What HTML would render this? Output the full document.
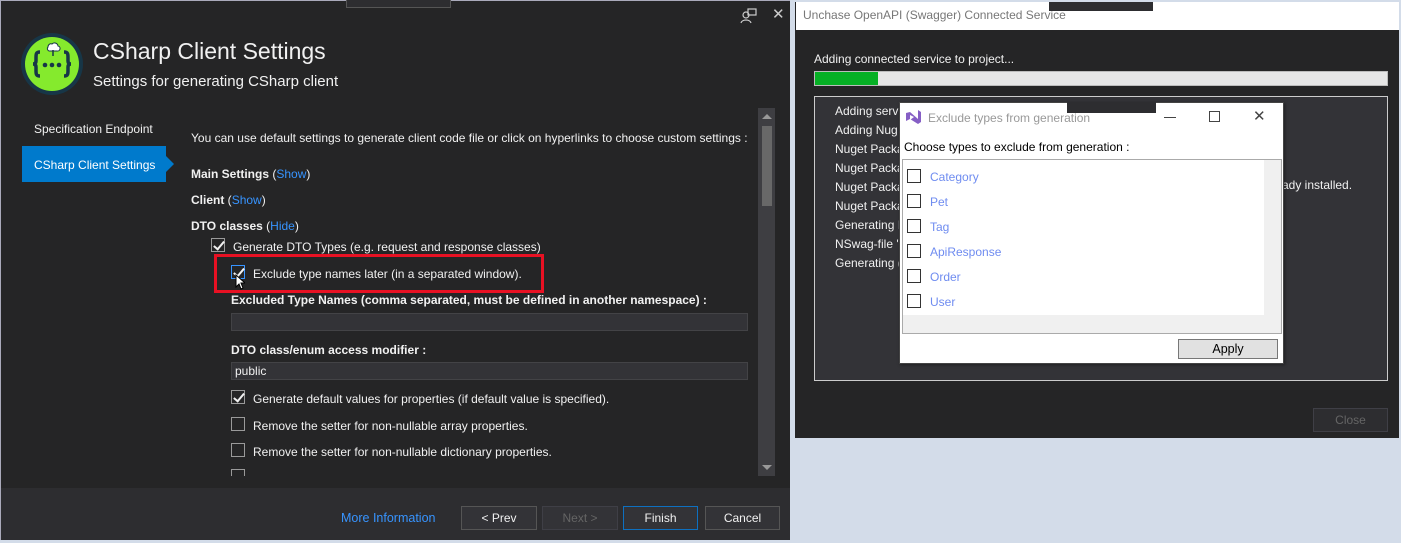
<!DOCTYPE html>
<html><head><meta charset="utf-8"><style>
*{box-sizing:border-box;margin:0;padding:0}
body{width:1401px;height:543px;background:#d3dce9;position:relative;overflow:hidden;font-family:"Liberation Sans",sans-serif;font-size:12px;color:#f1f1f1}
.a{position:absolute;white-space:nowrap}
.cb{position:absolute;width:14px;height:14px;border:1px solid #9a9a9a}
.ck::after{content:"";position:absolute;left:4px;top:0px;width:4px;height:9px;border:solid #f1f1f1;border-width:0 2px 2px 0;transform:rotate(40deg)}
.lnk{color:#3794ff}
.btn{position:absolute;height:24px;border:1px solid #555;background:#333337;color:#f1f1f1;text-align:center;line-height:22px;font-size:12px}
.wcb{position:absolute;width:14px;height:14px;border:1px solid #333;background:#fff}
.wl{position:absolute;color:#6f8cf0;font-size:12px}
</style></head><body>
<!-- left dialog -->
<div class="a" style="left:0;top:0;width:790px;height:540px;background:#252526;border-left:1px solid #aab;border-top:1px solid #aab"></div>
<div class="a" style="left:1px;top:488px;width:789px;height:52px;background:#2d2d30"></div>
<div class="a" style="left:346px;top:0;width:105px;height:8px;background:#2d2d30;border:1px solid #555;border-top:none"></div>
<svg class="a" style="left:740px;top:7px" width="18" height="18" viewBox="0 0 18 18" fill="none" stroke="#ccc" stroke-width="1.2"><rect x="8" y="2" width="8" height="6"/><circle cx="6" cy="8" r="3"/><path d="M1 16c1-4 9-4 10 0"/></svg>
<div class="a" style="left:772px;top:5px;color:#ccc;font-size:15px">✕</div>
<svg class="a" style="left:20px;top:32px" width="64" height="64" viewBox="0 0 64 64"><circle cx="32" cy="32" r="31" fill="#173647"/><circle cx="32" cy="32" r="27" fill="#85ea2d"/>
<path d="M20 20c-4 0-4 2-4 6v3c0 2-1 3-3 3c2 0 3 1 3 3v3c0 4 0 6 4 6" fill="none" stroke="#173647" stroke-width="3.5"/>
<path d="M44 20c4 0 4 2 4 6v3c0 2 1 3 3 3c-2 0-3 1-3 3v3c0 4 0 6-4 6" fill="none" stroke="#173647" stroke-width="3.5"/>
<circle cx="25" cy="33" r="2.3" fill="#173647"/><circle cx="32" cy="33" r="2.3" fill="#173647"/><circle cx="39" cy="33" r="2.3" fill="#173647"/>
<path d="M28 15a3 3 0 0 1 4-3a3.5 3.5 0 0 1 6 2a2.5 2.5 0 0 1-1 5h-8a2.5 2.5 0 0 1-1-4z" fill="#fff" stroke="#173647" stroke-width="1"/><path d="M33 18v6" stroke="#173647" stroke-width="1.5"/></svg>
<div class="a" style="left:93px;top:38px;font-size:23px;color:#f1f1f1">CSharp Client Settings</div>
<div class="a" style="left:93px;top:73px;font-size:15px">Settings for generating CSharp client</div>
<div class="a" style="left:34px;top:122px">Specification Endpoint</div>
<div class="a" style="left:22px;top:146px;width:144px;height:36px;background:#007acc"></div>
<div class="a" style="left:166px;top:156px;width:0;height:0;border-left:8px solid #007acc;border-top:8px solid transparent;border-bottom:8px solid transparent"></div>
<div class="a" style="left:34px;top:158px;color:#fff">CSharp Client Settings</div>
<div class="a" style="left:191px;top:131px">You can use default settings to generate client code file or click on hyperlinks to choose custom settings :</div>
<div class="a" style="left:191px;top:167px"><b>Main Settings</b> (<span class="lnk">Show</span>)</div>
<div class="a" style="left:191px;top:193px"><b>Client</b> (<span class="lnk">Show</span>)</div>
<div class="a" style="left:191px;top:219px"><b>DTO classes</b> (<span class="lnk">Hide</span>)</div>
<div class="cb ck" style="left:211px;top:238px"></div>
<div class="a" style="left:233px;top:240px">Generate DTO Types (e.g. request and response classes)</div>
<div class="a" style="left:214px;top:254px;width:330px;height:39px;border:3px solid #e81123"></div>
<div class="cb ck" style="left:231px;top:265px;border-color:#3794ff"></div>
<div class="a" style="left:253px;top:267px">Exclude type names later (in a separated window).</div>
<svg class="a" style="left:235px;top:274px" width="10" height="16" viewBox="0 0 10 16"><path d="M1 1v12l3-3 2 5 2-1-2-5h4z" fill="#fff" stroke="#000" stroke-width="1"/></svg>
<div class="a" style="left:231px;top:293px;font-weight:bold">Excluded Type Names (comma separated, must be defined in another namespace) :</div>
<div class="a" style="left:231px;top:313px;width:517px;height:18px;background:#333337;border:1px solid #434346"></div>
<div class="a" style="left:231px;top:343px;font-weight:bold">DTO class/enum access modifier :</div>
<div class="a" style="left:231px;top:362px;width:517px;height:18px;background:#333337;border:1px solid #434346;padding-left:3px;line-height:16px">public</div>
<div class="cb ck" style="left:231px;top:390px"></div>
<div class="a" style="left:253px;top:392px">Generate default values for properties (if default value is specified).</div>
<div class="cb" style="left:231px;top:417px"></div>
<div class="a" style="left:253px;top:419px">Remove the setter for non-nullable array properties.</div>
<div class="cb" style="left:231px;top:443px"></div>
<div class="a" style="left:253px;top:445px">Remove the setter for non-nullable dictionary properties.</div>
<div class="a" style="left:231px;top:469px;width:14px;height:7px;border:1px solid #9a9a9a;border-bottom:none"></div>
<div class="a" style="left:758px;top:108px;width:17px;height:368px;background:#3e3e42"></div>
<div class="a" style="left:762px;top:126px;width:10px;height:80px;background:#686868"></div>
<div class="a" style="left:762px;top:114px;border-left:5px solid transparent;border-right:5px solid transparent;border-bottom:5px solid #999"></div>
<div class="a" style="left:762px;top:465px;border-left:5px solid transparent;border-right:5px solid transparent;border-top:5px solid #999"></div>
<div class="a lnk" style="left:341px;top:511px;font-size:12.5px">More Information</div>
<div class="btn" style="left:461px;top:506px;width:76px">&lt; Prev</div>
<div class="btn" style="left:542px;top:506px;width:76px;color:#656565;border-color:#3f3f46">Next &gt;</div>
<div class="btn" style="left:623px;top:506px;width:75px;border-color:#0e70c0">Finish</div>
<div class="btn" style="left:705px;top:506px;width:75px">Cancel</div>
<!-- right dialog -->
<div class="a" style="left:795px;top:2px;width:604px;height:436px;background:#252526"></div>
<div class="a" style="left:796px;top:2px;width:603px;height:28px;background:#fff"></div>
<div class="a" style="left:803px;top:8px;color:#777;font-size:12px">Unchase OpenAPI (Swagger) Connected Service</div>
<div class="a" style="left:1049px;top:2px;width:104px;height:9px;background:#2d2d30"></div>
<div class="a" style="left:814px;top:52px">Adding connected service to project...</div>
<div class="a" style="left:814px;top:71px;width:574px;height:15px;background:#e6e6e6;border:1px solid #bcbcbc"></div>
<div class="a" style="left:815px;top:72px;width:63px;height:13px;background:#06b025"></div>
<div class="a" style="left:814px;top:96px;width:574px;height:285px;background:#333337;border:1px solid #ccc"></div>
<div class="a" style="left:835px;top:102px;line-height:19px">Adding serv<br>Adding Nug<br>Nuget Packa<br>Nuget Packa<br>Nuget Packa<br>Nuget Packa<br>Generating I<br>NSwag-file '<br>Generating (</div>
<div class="a" style="left:1282px;top:178px">ady installed.</div>
<div class="btn" style="left:1313px;top:408px;width:75px;color:#656565;border-color:#3f3f46;background:#2d2d30">Close</div>
<!-- popup -->
<div class="a" style="left:899px;top:102px;width:385px;height:262px;background:#fff;border:1px solid #444;box-shadow:1px 1px 3px rgba(0,0,0,.4)"></div>
<div class="a" style="left:1067px;top:102px;width:89px;height:11px;background:#2d2d30"></div>
<svg class="a" style="left:905px;top:109px" width="17" height="16" viewBox="0 0 17 16"><path d="M1 4l4-1 8 7V1l3 2v10l-3 2-8-5-4 2z" fill="#865fc5"/><path d="M5 6l4 2-4 3z" fill="#fff"/></svg>
<div class="a" style="left:928px;top:111px;color:#999">Exclude types from generation</div>
<div class="a" style="left:1164px;top:117px;width:12px;height:1px;background:#444"></div>
<div class="a" style="left:1209px;top:111px;width:11px;height:11px;border:1px solid #444"></div>
<div class="a" style="left:1253px;top:107px;color:#444;font-size:15px">✕</div>
<div class="a" style="left:904px;top:140px;color:#000">Choose types to exclude from generation :</div>
<div class="a" style="left:902px;top:159px;width:380px;height:175px;border:1px solid #aaa;background:#fff"></div>
<div class="a" style="left:1264px;top:160px;width:17px;height:155px;background:#f0f0f0"></div>
<div class="a" style="left:903px;top:315px;width:378px;height:18px;background:#f0f0f0"></div>
<div class="wcb" style="left:907px;top:169px"></div><div class="wl" style="left:930px;top:170px">Category</div>
<div class="wcb" style="left:907px;top:194px"></div><div class="wl" style="left:930px;top:195px">Pet</div>
<div class="wcb" style="left:907px;top:219px"></div><div class="wl" style="left:930px;top:220px">Tag</div>
<div class="wcb" style="left:907px;top:244px"></div><div class="wl" style="left:930px;top:245px">ApiResponse</div>
<div class="wcb" style="left:907px;top:269px"></div><div class="wl" style="left:930px;top:270px">Order</div>
<div class="wcb" style="left:907px;top:294px"></div><div class="wl" style="left:930px;top:295px">User</div>
<div class="a" style="left:1178px;top:339px;width:100px;height:20px;background:#e1e1e1;border:1px solid #777;color:#000;text-align:center;line-height:18px;font-size:12.5px">Apply</div>
</body></html>
